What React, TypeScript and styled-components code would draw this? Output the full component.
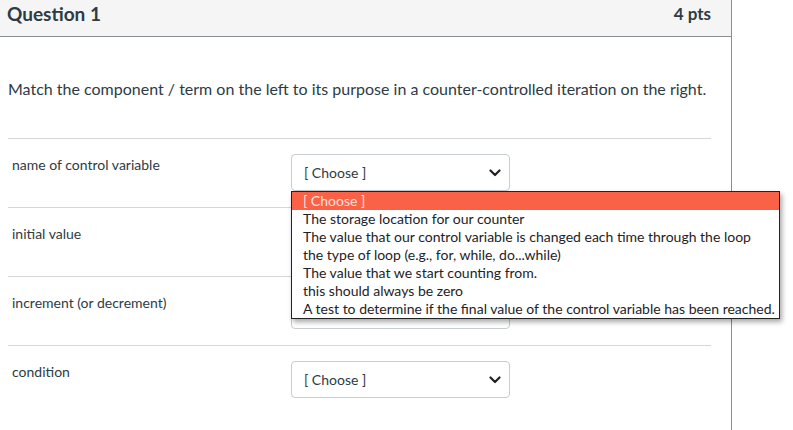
import React from "react";
import styled, { createGlobalStyle } from "styled-components";

const Global = createGlobalStyle`
  html, body { margin: 0; padding: 0; background: #fff; }
  body { font-family: Lato, "Noto Sans", sans-serif; color: #2d3b45; }
  * { box-sizing: border-box; }
`;

const Page = styled.div`
  width: 732px;
  height: 430px;
  border-right: 1px solid #8a8f93;
  position: relative;
  overflow: visible;
`;

const Header = styled.div`
  height: 37px;
  background: #f5f5f5;
  border-bottom: 1px solid #8a8f93;
  display: flex;
  align-items: flex-start;
  justify-content: space-between;
  padding: 2px 20px 0 7px;
`;

const Title = styled.h2`
  margin: 0;
  font-size: 19px;
  line-height: 23px;
  font-weight: 700;
  color: #2d3b45;
`;

const Points = styled.span`
  font-size: 17px;
  line-height: 23px;
  font-weight: 700;
  color: #2d3b45;
`;

const Body = styled.div`
  padding: 0 20px 0 8px;
`;

const Prompt = styled.p`
  margin: 0;
  padding: 42px 0 39px 0;
  font-size: 16px;
  line-height: 20px;
  color: #2d3b45;
`;

const Row = styled.div`
  position: relative;
  height: 69px;
  border-top: 1px solid #d4d7d9;
  display: flex;
  align-items: flex-start;
`;

const Label = styled.div`
  width: 283px;
  padding: 17px 0 0 4px;
  font-size: 14px;
  line-height: 18px;
  color: #2d3b45;
`;

const Select = styled.div<{ $covered?: boolean }>`
  margin-top: 15px;
  width: 219px;
  height: 37px;
  border: 1px solid #c7cdd1;
  border-radius: 4px;
  background: #fff;
  display: flex;
  align-items: center;
  justify-content: space-between;
  padding: 0 8px 0 12px;
  font-size: 14px;
  color: #2d3b45;
  visibility: ${(p) => (p.$covered ? "hidden" : "visible")};
`;

const SelectShell = styled.div`
  margin-top: 15px;
  width: 219px;
  height: 37px;
  border: 1px solid #c7cdd1;
  border-radius: 4px;
  background: #fff;
`;

const Menu = styled.ul`
  position: absolute;
  top: 52px;
  left: 283px;
  width: 489px;
  margin: 0;
  padding: 0;
  list-style: none;
  background: #fff;
  border: 1px solid #222;
  box-shadow: 2px 3px 5px rgba(0, 0, 0, 0.35);
  z-index: 5;
`;

const Option = styled.li<{ $active?: boolean }>`
  height: 18px;
  line-height: 18px;
  padding-left: 11px;
  font-size: 14px;
  white-space: nowrap;
  background: ${(p) => (p.$active ? "#fa6248" : "#fff")};
  color: ${(p) => (p.$active ? "#fde3dc" : "#1d2327")};
`;

const Chevron = () => (
  <svg width="12" height="8" viewBox="0 0 12 8">
    <path d="M1.5 1.5 L6 6 L10.5 1.5" fill="none" stroke="#222" strokeWidth="2.2" strokeLinecap="round" strokeLinejoin="round" />
  </svg>
);

const options = [
  "[ Choose ]",
  "The storage location for our counter",
  "The value that our control variable is changed each time through the loop",
  "the type of loop (e.g., for, while, do...while)",
  "The value that we start counting from.",
  "this should always be zero",
  "A test to determine if the final value of the control variable has been reached.",
];

const labels = ["name of control variable", "initial value", "increment (or decrement)", "condition"];

export default function App() {
  return (
    <>
      <Global />
      <Page>
        <Header>
          <Title>Question 1</Title>
          <Points>4 pts</Points>
        </Header>
        <Body>
          <Prompt>Match the component / term on the left to its purpose in a counter-controlled iteration on the right.</Prompt>
          {labels.map((l, i) => {
            const covered = i === 1 || i === 2;
            return (
              <Row key={l}>
                <Label>{l}</Label>
                {covered ? (
                  <SelectShell />
                ) : (
                  <Select>
                    <span>[ Choose ]</span>
                    <Chevron />
                  </Select>
                )}
                {i === 0 && (
                  <Menu>
                    {options.map((o, j) => (
                      <Option key={o} $active={j === 0}>{o}</Option>
                    ))}
                  </Menu>
                )}
              </Row>
            );
          })}
        </Body>
      </Page>
    </>
  );
}
